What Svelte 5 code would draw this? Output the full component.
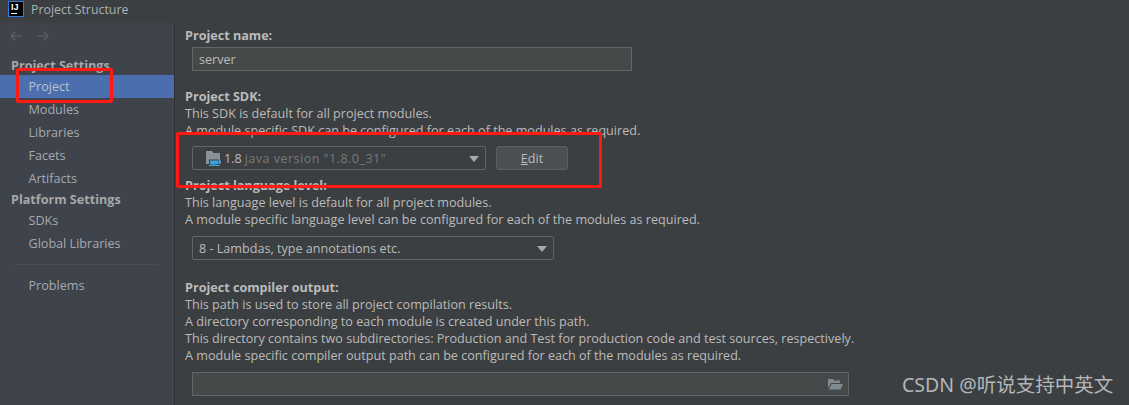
<script>
  const group1 = ['Modules', 'Libraries', 'Facets', 'Artifacts'];
  const group2 = ['SDKs', 'Global Libraries'];
</script>

<div class="window">
  <header class="titlebar">
    <div class="logo"><span class="ij">IJ</span><span class="dash"></span></div>
    <span class="title">Project Structure</span>
  </header>
  <div class="body">
    <aside class="sidebar">
      <div class="nav-arrows">
        <svg width="14" height="12" viewBox="0 0 14 12" fill="none" stroke="#585c5f" stroke-width="1.6"><path d="M13 6H2M6.500 1.500 2 6l4.500 4.500"/></svg>
        <svg width="14" height="12" viewBox="0 0 14 12" fill="none" stroke="#585c5f" stroke-width="1.6"><path d="M1 6h11M7.500 1.500 12 6l-4.500 4.500"/></svg>
      </div>
      <div class="head first">Project Settings</div>
      <div class="item selected">Project</div>
      {#each group1 as g}<div class="item">{g}</div>{/each}
      <div class="head">Platform Settings</div>
      {#each group2 as g}<div class="item">{g}</div>{/each}
      <div class="sep"></div>
      <div class="item">Problems</div>
    </aside>
    <main class="content">
      <div class="label l-name">Project name:</div>
      <div class="field name-field">server</div>

      <div class="label l-sdk">Project SDK:</div>
      <div class="line">This SDK is default for all project modules.</div>
      <div class="line">A module specific SDK can be configured for each of the modules as required.</div>
      <div class="sdk-row">
        <div class="combo sdk-combo">
          <svg class="jdk" width="18" height="16" viewBox="0 0 18 16">
            <path d="M0 1h6l1.500 2H14v11H0z" fill="#8a9299"/>
            <path d="M3 9.500h10v4a1.500 1.500 0 0 1-1.500 1.500h-7A1.500 1.500 0 0 1 3 13.500z" fill="#3c3f41"/>
            <path d="M4 10.500h8v2.500a1.500 1.500 0 0 1-1.500 1.500h-5A1.500 1.500 0 0 1 4 13z" fill="#3ea3e0"/>
            <path d="M12 11h2.500v2H12" fill="none" stroke="#3ea3e0"/>
            <path d="M3 15.500h11" stroke="#3ea3e0"/>
          </svg>
          <span class="ver">1.8</span><span class="muted">java version "1.8.0_31"</span>
          <span class="caret"></span>
        </div>
        <div class="btn"><u>E</u>dit</div>
      </div>

      <div class="label l-lang">Project language level:</div>
      <div class="line">This language level is default for all project modules.</div>
      <div class="line">A module specific language level can be configured for each of the modules as required.</div>
      <div class="combo lang-combo">8 - Lambdas, type annotations etc.<span class="caret"></span></div>

      <div class="label l-out">Project compiler output:</div>
      <div class="line">This path is used to store all project compilation results.</div>
      <div class="line">A directory corresponding to each module is created under this path.</div>
      <div class="line">This directory contains two subdirectories: Production and Test for production code and test sources, respectively.</div>
      <div class="line">A module specific compiler output path can be configured for each of the modules as required.</div>
      <div class="field out-field">
        <svg width="15" height="12" viewBox="0 0 15 12"><path d="M0 1h5l1 1.500h6V5H3L0 10z" fill="#7f8b91"/><path d="M3.500 6H15l-2.500 5.500H0.800z" fill="#7f8b91"/></svg>
      </div>
    </main>
  </div>
  <div class="mark box-a"></div>
  <div class="mark box-b"></div>
  <div class="watermark">CSDN @听说支持中英文</div>
</div>

<style>
  :global(body) { margin: 0; background: #3c3f41; }
  .window {
    position: relative;
    width: 1129px;
    height: 405px;
    overflow: hidden;
    background: #3c3f41;
    color: #bbbbbb;
    font-family: "Open Sans", "Noto Sans", sans-serif;
    font-size: 12.600px;
    line-height: 17px;
  }
  .titlebar {
    height: 23px;
    display: flex;
    align-items: flex-start;
    gap: 7px;
    padding-left: 8px;
    box-sizing: border-box;
  }
  .logo {
    width: 16px;
    height: 16px;
    margin-top: 1px;
    background: #000;
    border: 1px solid #2f7fe0;
    box-sizing: border-box;
    position: relative;
    color: #fff;
    flex: none;
  }
  .ij { position: absolute; left: 2px; top: -1px; font: 700 9px/12px "Liberation Sans", sans-serif; }
  .dash { position: absolute; left: 2px; bottom: 2px; width: 6px; height: 1px; background: #fff; }
  .title { color: #a9b1b5; font-size: 12.400px; line-height: 20px; }
  .body { display: flex; height: 382px; }
  .sidebar {
    width: 174px;
    flex: none;
    background: #3e434c;
    border-right: 1px solid #323232;
  }
  .nav-arrows { display: flex; gap: 13px; padding: 7px 0 0 9px; height: 23px; }
  .nav-arrows svg { display: block; }
  .head { font-weight: 700; color: #a8a8a8; padding-left: 11px; line-height: 19px; height: 19px; }
  .head.first { margin-top: 3px; }
  .item { padding-left: 28.500px; height: 23px; line-height: 23px; color: #a6aab0; }
  .item.selected { background: #4b6eaf; color: #b9c2d4; }
  .sep { height: 1px; background: #4a4d4f; margin: 9px 15px 9px 13px; }
  .content { flex: 1; padding: 4px 0 0 10px; box-sizing: border-box; min-width: 0; }
  .label { font-weight: 700; color: #bbbbbb; }
  .line { color: #bbbbbb; white-space: nowrap; }
  .field {
    border: 1px solid #646464;
    background: #45494a;
    box-sizing: border-box;
    height: 24px;
    margin-left: 7px;
    display: flex;
    align-items: center;
    padding-left: 6px;
  }
  .name-field { width: 440px; margin-top: 3px; }
  .l-sdk { margin-top: 17px; }
  .sdk-row { display: flex; gap: 10px; margin: 7px 0 0 7px; align-items: center; height: 24px; }
  .combo {
    border: 1px solid #646464;
    border-radius: 2px;
    box-sizing: border-box;
    height: 24px;
    display: flex;
    align-items: center;
    position: relative;
    padding-left: 6px;
  }
  .sdk-combo { width: 294px; padding-left: 13px; }
  .jdk { flex: none; }
  .ver { margin: 0 3px 0 0; }
  .muted { color: #787878; letter-spacing: 0.450px; }
  .caret {
    position: absolute;
    right: 6px;
    top: 9px;
    border-left: 5px solid transparent;
    border-right: 5px solid transparent;
    border-top: 6px solid #a9a9a9;
  }
  .btn {
    width: 72px;
    height: 24px;
    box-sizing: border-box;
    border: 1px solid #5e6060;
    border-radius: 3px;
    background: #4c5052;
    text-align: center;
    line-height: 23px;
  }
  .l-lang { margin-top: 7px; }
  .lang-combo { width: 362px; margin: 8px 0 0 7px; }
  .l-out { margin-top: 19px; }
  .out-field { width: 657px; margin-top: 8px; justify-content: flex-end; padding-right: 5px; }
  .mark {
    position: absolute;
    border: 3px solid #ff1a12;
    border-radius: 2px;
    box-sizing: border-box;
    pointer-events: none;
  }
  .box-a { left: 16px; top: 68px; width: 97px; height: 35px; }
  .box-b { left: 176px; top: 132px; width: 426px; height: 56px; }
  .watermark {
    position: absolute;
    left: 902px;
    top: 373px;
    font-family: "Noto Sans", "Noto Sans CJK SC", sans-serif;
    font-size: 19.500px;
    line-height: 24px;
    color: #b4b6b7;
    white-space: nowrap;
  }
</style>
